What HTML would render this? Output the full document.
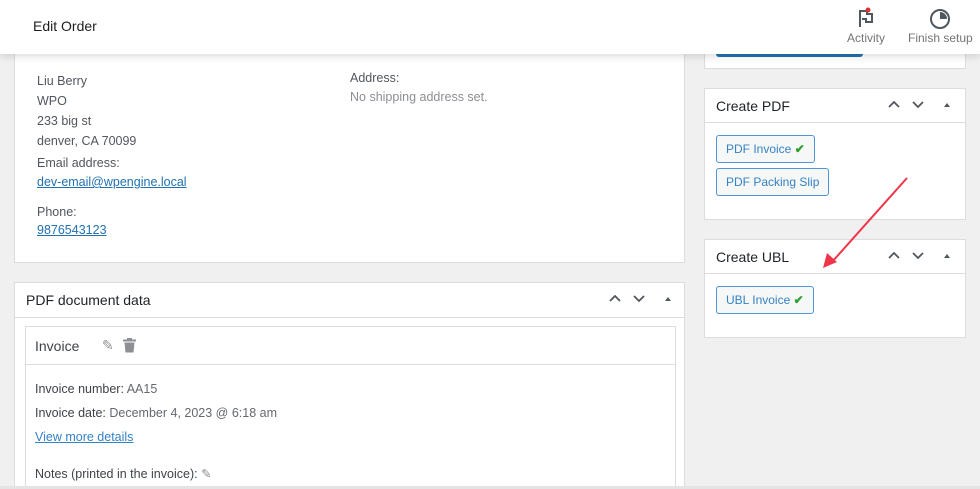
<!DOCTYPE html>
<html><head><style>
*{box-sizing:border-box;margin:0;padding:0}
html,body{width:980px;height:489px;overflow:hidden}
body{background:#f0f0f1;font-family:"Liberation Sans",sans-serif;font-size:12.5px;color:#50575e;position:relative}
.hdr{position:absolute;left:0;top:0;width:980px;height:54px;background:#fff;box-shadow:0 2px 8px rgba(0,0,0,.15);z-index:5}
.box{position:absolute;background:#fff;border:1px solid #dcdcde;overflow:hidden}
.t{position:absolute;white-space:nowrap}
a{color:#2271b1}
.hline{position:absolute;left:0;right:0;height:1px;background:#dcdcde}
.btn{position:absolute;border:1px solid #4f94d4;border-radius:3px;background:#f6f7f7;color:#3582c4;font-size:12px;padding:0 9px;height:28px;line-height:26px;white-space:nowrap}
.ck{color:#2ea02e;font-weight:bold}
.ctl{position:absolute}
</style></head><body>
<div class="hdr">
 <div class="t" style="left:33px;top:18px;font-size:14px;color:#1e1e1e">Edit Order</div>
 <svg style="position:absolute;left:857px;top:7px" width="20" height="22" viewBox="0 0 20 22"><path d="M3 20V4h7v3h5v8h-6v-3H5" fill="none" stroke="#50575e" stroke-width="2"/><circle cx="11" cy="3" r="2.5" fill="#d63638"/></svg>
 <div class="t" style="left:847px;top:31px;font-size:12px;color:#757575">Activity</div>
 <svg style="position:absolute;left:929px;top:8px" width="22" height="22" viewBox="0 0 22 22"><circle cx="11" cy="11" r="9" fill="none" stroke="#50575e" stroke-width="2"/><path d="M11 4a7 7 0 0 1 7 7h-7z" fill="#50575e"/></svg>
 <div class="t" style="left:908px;top:31px;font-size:12px;color:#757575">Finish setup</div>
</div>

<div class="box" style="left:14px;top:20px;width:671px;height:243px">
 <div class="t" style="left:22px;top:50px;line-height:20px">Liu Berry<br>WPO<br>233 big st<br>denver, CA 70099</div>
 <div class="t" style="left:22px;top:135px">Email address:</div>
 <div class="t" style="left:22px;top:154px"><a href="#">dev-email@wpengine.local</a></div>
 <div class="t" style="left:22px;top:184px">Phone:</div>
 <div class="t" style="left:22px;top:202px"><a href="#">9876543123</a></div>
 <div class="t" style="left:335px;top:50px">Address:</div>
 <div class="t" style="left:335px;top:69px;color:#8c8f94">No shipping address set.</div>
</div>

<svg width="0" height="0" style="position:absolute"><defs>
<g id="ctl"><path d="M1 6l5-5 5 5" fill="none" stroke="#50575e" stroke-width="1.8"/><path d="M25 1l5 5 5-5" fill="none" stroke="#50575e" stroke-width="1.8"/><path d="M56 6l3-4 3 4z" fill="#50575e"/></g></defs></svg>

<div class="box" style="left:14px;top:282px;width:671px;height:207px">
 <div class="t" style="left:11px;top:9px;font-size:14px;color:#1d2327">PDF document data</div>
 <svg class="ctl" style="left:594px;top:12px" width="64" height="8"><use href="#ctl"/></svg>
 <div class="hline" style="top:34px"></div>
 <div class="box" style="left:10px;top:43px;width:651px;height:162px">
  <div class="t" style="left:9px;top:11px;font-size:14px;color:#3c434a">Invoice</div>
  <div class="t" style="left:76px;top:10px;font-size:14px;color:#8c8f94">&#9998;</div>
  <svg style="position:absolute;left:97px;top:11px" width="13" height="15" viewBox="0 0 13 15"><rect x="0" y="1.5" width="13" height="2" fill="#8c8f94"/><rect x="4" y="0" width="5" height="2" fill="#8c8f94"/><path d="M1.5 4.5h10l-1 10h-8z" fill="#8c8f94"/></svg>
  <div class="hline" style="top:37px"></div>
  <div class="t" style="left:9px;top:55px;color:#3c434a">Invoice number: <span style="color:#646970">AA15</span></div>
  <div class="t" style="left:9px;top:79px;color:#3c434a">Invoice date: <span style="color:#646970">December 4, 2023 @ 6:18 am</span></div>
  <div class="t" style="left:9px;top:103px"><a href="#" style="color:#3582c4">View more details</a></div>
  <div class="t" style="left:9px;top:139px;color:#3c434a">Notes (printed in the invoice): <span style="color:#8c8f94">&#9998;</span></div>
 </div>
</div>

<div class="box" style="left:704px;top:20px;width:262px;height:49px">
 <div style="position:absolute;left:11px;top:30px;width:147px;height:6px;background:#2271b1;border-radius:0 0 3px 3px"></div>
</div>

<div class="box" style="left:704px;top:88px;width:262px;height:132px">
 <div class="t" style="left:11px;top:9px;font-size:14px;color:#1d2327">Create PDF</div>
 <svg class="ctl" style="left:183px;top:12px" width="64" height="8"><use href="#ctl"/></svg>
 <div class="hline" style="top:33px"></div>
 <div class="btn" style="left:11px;top:46px">PDF Invoice <span class="ck">&#10004;</span></div>
 <div class="btn" style="left:11px;top:79px">PDF Packing Slip</div>
</div>

<div class="box" style="left:704px;top:239px;width:262px;height:99px">
 <div class="t" style="left:11px;top:9px;font-size:14px;color:#1d2327">Create UBL</div>
 <svg class="ctl" style="left:183px;top:12px" width="64" height="8"><use href="#ctl"/></svg>
 <div class="hline" style="top:33px"></div>
 <div class="btn" style="left:11px;top:46px">UBL Invoice <span class="ck">&#10004;</span></div>
</div>

<svg style="position:absolute;left:0;top:0" width="980" height="489"><line x1="907" y1="178" x2="832" y2="262" stroke="#f0354a" stroke-width="2"/><path d="M823 268l4-15 10 9z" fill="#f0354a"/></svg>
<div style="position:absolute;left:0;top:486px;width:980px;height:3px;background:#e4e4e4"></div>
</body></html>
